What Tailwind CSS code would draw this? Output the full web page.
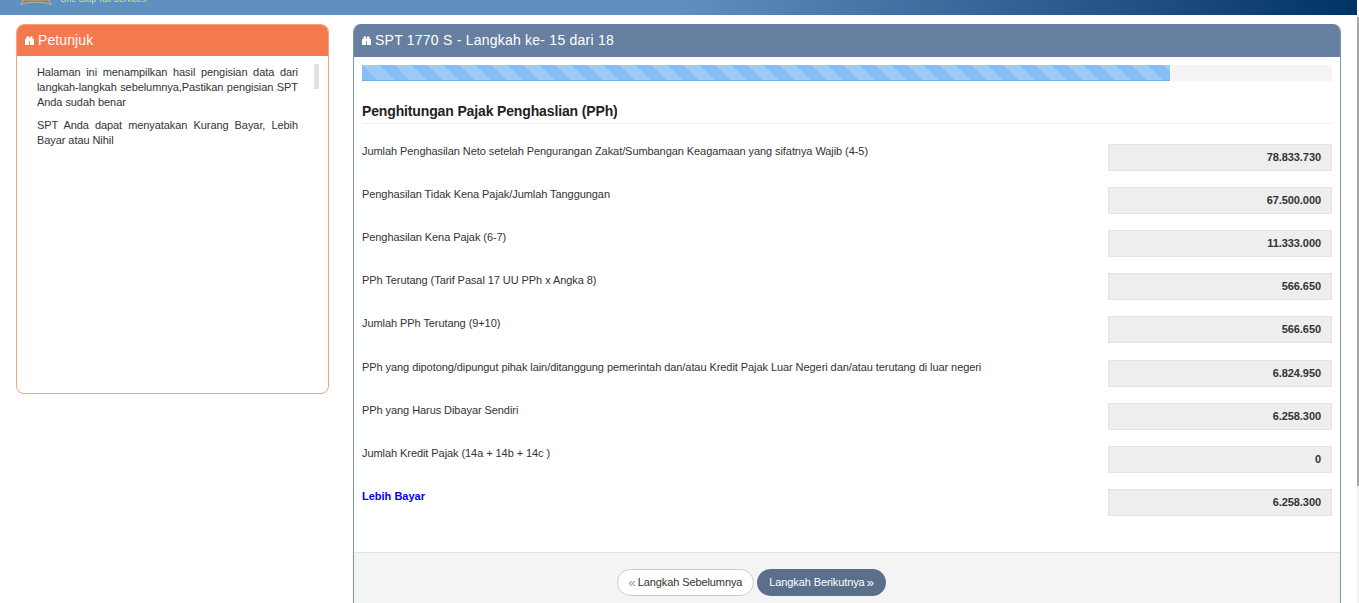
<!DOCTYPE html>
<html lang="en">
<head>
    <meta charset="UTF-8">
    <title>SPT 1770 S</title>
    <script src="https://cdn.jsdelivr.net/npm/@tailwindcss/browser@4"></script>
</head>
<body class="h-screen overflow-hidden bg-white font-['Liberation_Sans',Arial,sans-serif] text-[11px] text-[#333]">
    <!-- top bar, scrolled so only the bottom shows -->
    <div class="relative h-[15px] w-[1357px] overflow-hidden bg-gradient-to-r from-[#6090c0] from-50% to-[#003366]">
        <svg class="absolute left-[20px] top-0" width="32" height="6" viewBox="0 0 32 6">
            <path d="M1 4.5 L3.5 0 H28.5 L31 4.5 L27 3 Q16 1 5 3 Z" fill="#8f7a4e" stroke="#d9cfa8" stroke-width="0.7"/>
        </svg>
        <span class="absolute left-[60px] top-[-7px] text-[8.5px] leading-[12px] text-[#c0f070]">One Stop Tax Services</span>
    </div>

    <div class="flex items-start pl-[16px] pt-[9px]">
        <!-- petunjuk -->
        <div class="w-[313px] h-[370px] rounded-[8px] border border-[#f9a27c] overflow-hidden">
            <div class="h-[32px] -mx-px -mt-px bg-[#f4794e] flex items-center pl-[9px] text-white text-[14px] tracking-[0.1px] gap-[4px]">
                <svg width="9" height="9" viewBox="0 0 9 9" fill="#fff"><circle cx="2.8" cy="1.8" r="1.6"/><circle cx="6.2" cy="1.8" r="1.6"/><path fill-rule="evenodd" d="M0 3h9v6H0zM4.1 5v4h.8V5z"/></svg>
                <span>Petunjuk</span>
            </div>
            <div class="relative pl-[20px] pr-[30px] pt-[9px] text-[11px] leading-[15px] tracking-[-0.07px] text-[#333]">
                <p class="text-justify mb-[8px]">Halaman ini menampilkan hasil pengisian data dari langkah-langkah sebelumnya,Pastikan pengisian SPT Anda sudah benar</p>
                <p class="text-justify">SPT Anda dapat menyatakan Kurang Bayar, Lebih Bayar atau Nihil</p>
                <div class="absolute right-[9px] top-[8px] w-[5px] h-[25px] bg-[#e3e3e3]"></div>
            </div>
        </div>

        <!-- main panel -->
        <div class="ml-[24px] w-[988px] h-[600px] rounded-t-[8px] border-x border-[#7a93b3] overflow-hidden">
            <div class="h-[33px] -mx-px bg-[#677fa0] flex items-center pl-[9px] gap-[4px] text-white text-[14px] tracking-[0.23px]">
                <svg width="9" height="9" viewBox="0 0 9 9" fill="#fff"><circle cx="2.8" cy="1.8" r="1.6"/><circle cx="6.2" cy="1.8" r="1.6"/><path fill-rule="evenodd" d="M0 3h9v6H0zM4.1 5v4h.8V5z"/></svg>
                <span>SPT 1770 S - Langkah ke- 15 dari 18</span>
            </div>
            <div class="h-[495px] px-[8px] pt-[8px] tracking-[-0.07px]">
                <div class="h-[16px] w-[970px] bg-[#f5f5f5]">
                    <div class="h-full w-[808px] border-b border-[#6fb0e8] bg-[repeating-linear-gradient(45deg,#85bff4_0,#85bff4_11.31px,#9bcbf6_11.31px,#9bcbf6_22.63px)]"></div>
                </div>
                <h2 class="mt-[21px] w-[970px] h-[22px] border-b border-[#eee] font-bold text-[14px] leading-[18px] tracking-[-0.14px] text-[#222]">Penghitungan Pajak Penghaslian (PPh)</h2>

                <div class="mt-[20px] w-[970px]">
                    <div class="flex justify-between h-[43px]">
                        <span class="pt-[1px] leading-[13px]">Jumlah Penghasilan Neto setelah Pengurangan Zakat/Sumbangan Keagamaan yang sifatnya Wajib (4-5)</span>
                        <div class="w-[224px] h-[27px] bg-[#eee] border border-[#e3e3e3] flex items-center justify-end pr-[10px] font-bold">78.833.730</div>
                    </div>
                    <div class="flex justify-between h-[43px]">
                        <span class="pt-[1px] leading-[13px]">Penghasilan Tidak Kena Pajak/Jumlah Tanggungan</span>
                        <div class="w-[224px] h-[27px] bg-[#eee] border border-[#e3e3e3] flex items-center justify-end pr-[10px] font-bold">67.500.000</div>
                    </div>
                    <div class="flex justify-between h-[43px]">
                        <span class="pt-[1px] leading-[13px]">Penghasilan Kena Pajak (6-7)</span>
                        <div class="w-[224px] h-[27px] bg-[#eee] border border-[#e3e3e3] flex items-center justify-end pr-[10px] font-bold">11.333.000</div>
                    </div>
                    <div class="flex justify-between h-[43px]">
                        <span class="pt-[1px] leading-[13px]">PPh Terutang (Tarif Pasal 17 UU PPh x Angka 8)</span>
                        <div class="w-[224px] h-[27px] bg-[#eee] border border-[#e3e3e3] flex items-center justify-end pr-[10px] font-bold">566.650</div>
                    </div>
                    <div class="flex justify-between h-[44px]">
                        <span class="pt-[1px] leading-[13px]">Jumlah PPh Terutang (9+10)</span>
                        <div class="w-[224px] h-[27px] bg-[#eee] border border-[#e3e3e3] flex items-center justify-end pr-[10px] font-bold">566.650</div>
                    </div>
                    <div class="flex justify-between h-[43px]">
                        <span class="pt-[1px] leading-[13px]">PPh yang dipotong/dipungut pihak lain/ditanggung pemerintah dan/atau Kredit Pajak Luar Negeri dan/atau terutang di luar negeri</span>
                        <div class="w-[224px] h-[27px] bg-[#eee] border border-[#e3e3e3] flex items-center justify-end pr-[10px] font-bold">6.824.950</div>
                    </div>
                    <div class="flex justify-between h-[43px]">
                        <span class="pt-[1px] leading-[13px]">PPh yang Harus Dibayar Sendiri</span>
                        <div class="w-[224px] h-[27px] bg-[#eee] border border-[#e3e3e3] flex items-center justify-end pr-[10px] font-bold">6.258.300</div>
                    </div>
                    <div class="flex justify-between h-[43px]">
                        <span class="pt-[1px] leading-[13px]">Jumlah Kredit Pajak (14a + 14b + 14c )</span>
                        <div class="w-[224px] h-[27px] bg-[#eee] border border-[#e3e3e3] flex items-center justify-end pr-[10px] font-bold">0</div>
                    </div>
                    <div class="flex justify-between h-[43px]">
                        <span class="pt-[1px] leading-[13px] font-bold tracking-normal text-[#0000ff]">Lebih Bayar</span>
                        <div class="w-[224px] h-[27px] bg-[#eee] border border-[#e3e3e3] flex items-center justify-end pr-[10px] font-bold">6.258.300</div>
                    </div>
                </div>
            </div>
            <div class="h-[60px] bg-[#f4f4f4] border-t border-[#e3e3e3] flex pl-[263px] pt-[16px] gap-[3px] tracking-[-0.1px]">
                <div class="h-[27px] w-[137px] rounded-full bg-white border border-[#ccc] flex items-center justify-center gap-[2px]"><span class="text-[13px] leading-none text-[#999]">«</span><span>Langkah Sebelumnya</span></div>
                <div class="h-[27px] w-[129px] rounded-full bg-[#5a6f8c] text-white flex items-center justify-center gap-[2px]"><span>Langkah Berikutnya</span><span class="text-[13px] leading-none">»</span></div>
            </div>
        </div>
    </div>

    <!-- page scrollbar -->
    <div class="absolute right-0 top-[17px] w-[2px] h-[586px] bg-[#f1f1f1]">
        <div class="h-[469px] bg-[#a8a8a8]"></div>
    </div>
</body>
</html>
